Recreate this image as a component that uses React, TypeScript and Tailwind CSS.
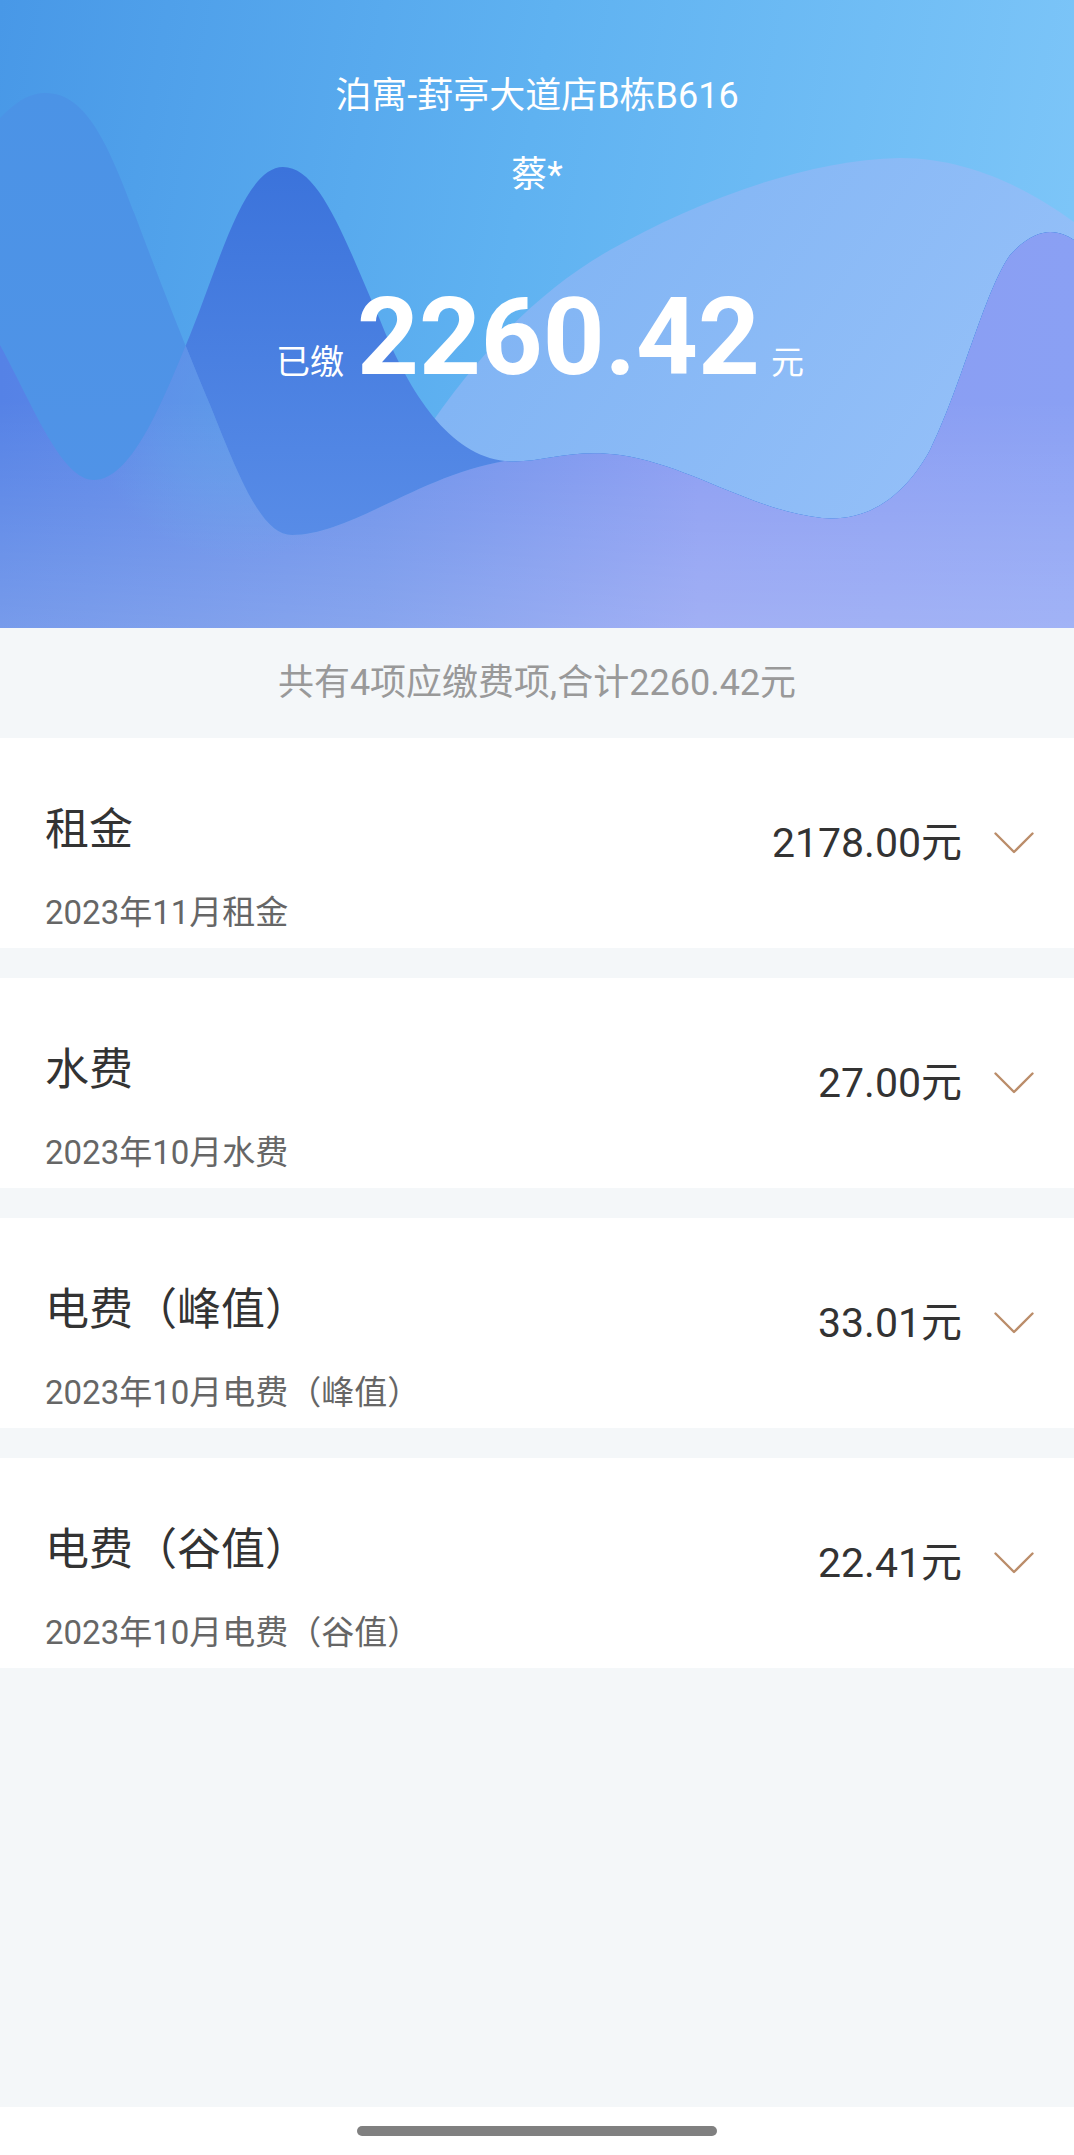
import React from "react"

const font = { fontFamily: 'Roboto, "Noto Sans CJK SC", sans-serif' }

const bills = [
  { name: "租金", desc: "2023年11月租金", amount: "2178.00元" },
  { name: "水费", desc: "2023年10月水费", amount: "27.00元" },
  { name: "电费（峰值）", desc: "2023年10月电费（峰值）", amount: "33.01元" },
  { name: "电费（谷值）", desc: "2023年10月电费（谷值）", amount: "22.41元" },
]

// right part shared by both waves
const waveTail =
  "C540 464 570 448 620 455 C690 465 750 510 822 518 C870 522 905 495 930 450 C960 390 985 290 1010 255 C1025 238 1040 232 1050 232 C1060 232 1068 236 1074 240 L1074 628 L0 628 Z"

const wavePath =
  "M0 345 C35 410 62 480 94 480 C130 480 160 410 192 330 C220 260 245 167 283 167 C320 167 345 240 380 320 C410 395 450 455 505 461 " +
  waveTail

const humpPath =
  "M0 118 C18 100 30 93 46 93 C88 93 110 150 135 215 C165 295 185 345 210 405 C240 480 262 535 292 535 C350 535 420 475 505 461 " +
  waveTail

function HeaderWaves() {
  return (
    <svg className="absolute inset-0 h-full w-full" viewBox="0 0 1074 628" preserveAspectRatio="none">
      <defs>
        <linearGradient id="bgGrad" x1="0" y1="0" x2="1074" y2="200" gradientUnits="userSpaceOnUse">
          <stop offset="0" stopColor="#4898e7" />
          <stop offset="0.5" stopColor="#5fb2f1" />
          <stop offset="1" stopColor="#7cc5f8" />
        </linearGradient>
        <linearGradient id="lightGrad" x1="450" y1="160" x2="1050" y2="560" gradientUnits="userSpaceOnUse">
          <stop offset="0" stopColor="#7db2f3" />
          <stop offset="1" stopColor="#98c2f9" />
        </linearGradient>
        <linearGradient id="darkGrad" x1="0" y1="167" x2="0" y2="540" gradientUnits="userSpaceOnUse">
          <stop offset="0" stopColor="#3b73db" />
          <stop offset="1" stopColor="#588ce7" />
        </linearGradient>
        <linearGradient id="humpGrad" x1="0" y1="90" x2="0" y2="500" gradientUnits="userSpaceOnUse">
          <stop offset="0" stopColor="#4b93e6" />
          <stop offset="1" stopColor="#5093e7" />
        </linearGradient>
        <linearGradient id="mixGrad" x1="0" y1="0" x2="1074" y2="0" gradientUnits="userSpaceOnUse">
          <stop offset="0" stopColor="#5582e6" />
          <stop offset="0.35" stopColor="#6a8fea" />
          <stop offset="0.65" stopColor="#8a9cf2" />
          <stop offset="1" stopColor="#8aa0f4" />
        </linearGradient>
        <radialGradient id="glowGrad" cx="240" cy="410" r="150" gradientUnits="userSpaceOnUse">
          <stop offset="0" stopColor="#5d9ae9" stopOpacity="0.95" />
          <stop offset="0.55" stopColor="#5d9ae9" stopOpacity="0.55" />
          <stop offset="1" stopColor="#5d9ae9" stopOpacity="0" />
        </radialGradient>
        <linearGradient id="fadeGrad" x1="0" y1="400" x2="0" y2="628" gradientUnits="userSpaceOnUse">
          <stop offset="0" stopColor="#ffffff" stopOpacity="0" />
          <stop offset="1" stopColor="#ffffff" stopOpacity="0.2" />
        </linearGradient>
        <clipPath id="humpClip">
          <path d={humpPath} />
        </clipPath>
        <clipPath id="waveClip">
          <path d={wavePath} />
        </clipPath>
      </defs>
      <rect width="1074" height="628" fill="url(#bgGrad)" />
      <path
        d="M420 440 C480 350 540 290 610 250 C690 205 800 160 900 158 C970 158 1030 190 1074 222 L1074 628 L420 628 Z"
        fill="url(#lightGrad)"
      />
      <path d={wavePath} fill="url(#darkGrad)" />
      <path d={humpPath} fill="url(#humpGrad)" />
      <g clipPath="url(#humpClip)">
        <g clipPath="url(#waveClip)">
          <rect width="1074" height="628" fill="url(#mixGrad)" />
          <rect width="1074" height="628" fill="url(#glowGrad)" />
          <rect width="1074" height="628" fill="url(#fadeGrad)" />
        </g>
      </g>
    </svg>
  )
}

function ChevronDown() {
  return (
    <svg width="40" height="22" viewBox="0 0 40 22" fill="none">
      <path d="M1.5 1.5 L20 20 L38.5 1.5" stroke="#bb8d6a" strokeWidth="2.4" strokeLinecap="round" strokeLinejoin="round" />
    </svg>
  )
}

function BillRow({ name, desc, amount }: { name: string; desc: string; amount: string }) {
  return (
    <div className="flex h-[210px] items-center bg-white pl-[45px] pr-[40px]">
      <div className="flex flex-1 flex-col self-stretch pt-[62px]">
        <div className="text-[44px] leading-[60px] text-[#333333]">{name}</div>
        <div className="mt-[30px] text-[33px] leading-[46px] text-[#666666]">{desc}</div>
      </div>
      <div className="text-[41px] leading-[56px] text-[#333333]">{amount}</div>
      <div className="ml-[32px] flex items-center">
        <ChevronDown />
      </div>
    </div>
  )
}

export default function App() {
  return (
    <div className="flex h-[2155px] w-full flex-col bg-[#f4f7f9]" style={font}>
      <div className="relative h-[628px] overflow-hidden">
        <HeaderWaves />
        <div className="relative flex flex-col items-center pt-[72px] text-white">
          <div className="text-[36px] leading-[48px]">泊寓-葑亭大道店B栋B616</div>
          <div className="mt-[31px] text-[36px] leading-[48px]">蔡*</div>
          <div className="mt-[84px] flex items-baseline pl-[6px]">
            <span className="text-[34px] leading-[48px]">已缴</span>
            <span className="ml-[13px] mr-[11px] text-[108px] font-bold leading-[108px]">2260.42</span>
            <span className="text-[33px] leading-[48px]">元</span>
          </div>
        </div>
      </div>

      <div className="flex h-[110px] items-center justify-center text-[36px] text-[#999999]">
        共有4项应缴费项,合计2260.42元
      </div>

      <div className="flex flex-col gap-[30px]">
        {bills.map((b, i) => (
          <BillRow key={i} name={b.name} desc={b.desc} amount={b.amount} />
        ))}
      </div>

      <div className="flex-1" />

      <div className="flex h-[48px] items-center justify-center bg-white">
        <div className="h-[10px] w-[360px] rounded-full bg-[#808080]" />
      </div>
    </div>
  )
}
